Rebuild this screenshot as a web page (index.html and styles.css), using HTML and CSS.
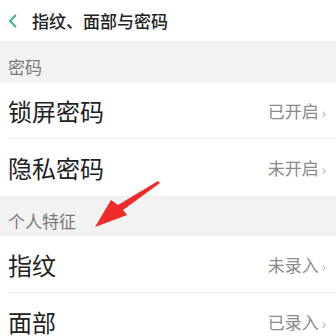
FILE: index.html
```html
<!DOCTYPE html>
<html>
	<head>
		<meta charset="utf-8" />
		<meta name="viewport" content="width=device-width, initial-scale=1">
		<title>指纹、面部与密码</title>
		<link rel="stylesheet" href="styles.css">
	</head>
	<body>
		<div class="header">
			<svg class="back" width="10" height="14" viewBox="0 0 10 14">
				<polyline points="8,1 2,7 8,13" fill="none" stroke="#3fb68e" stroke-width="2" />
			</svg>
			<span class="title">指纹、面部与密码</span>
		</div>
		<div class="section">密码</div>
		<div class="row">
			<span class="name">锁屏密码</span>
			<span class="state">已开启<i class="arrow">›</i></span>
		</div>
		<div class="row last">
			<span class="name">隐私密码</span>
			<span class="state">未开启<i class="arrow">›</i></span>
		</div>
		<div class="section">个人特征</div>
		<div class="row">
			<span class="name">指纹</span>
			<span class="state">未录入<i class="arrow">›</i></span>
		</div>
		<div class="row last">
			<span class="name">面部</span>
			<span class="state">已录入<i class="arrow">›</i></span>
		</div>
		<svg class="mark" width="80" height="50" viewBox="0 0 80 50">
			<polygon points="65,1 67,3 30,30 34,35 2,47 18,20 25,25" fill="#ee2b2b" />
		</svg>
	</body>
</html>
```
FILE: styles.css
```css
* {
	padding: 0;
	margin: 0;
}

body {
	width: 336px;
	height: 336px;
	overflow: hidden;
	background-color: #fff;
	font-family: "Noto Sans CJK SC", "Noto Sans", sans-serif;
	position: relative;
}

.header {
	height: 41px;
	display: flex;
	align-items: center;
	padding-left: 8px;
	border-bottom: 1px solid #ececec;
}

.back {
	margin-right: 14px;
}

.title {
	font-size: 17px;
	font-weight: 500;
	color: #222;
}

.section {
	height: 40px;
	line-height: 50px;
	background-color: #f2f2f2;
	color: #777;
	font-size: 17px;
	padding-left: 8px;
}

.row {
	height: 56px;
	margin-left: 8px;
	padding-right: 10px;
	display: flex;
	align-items: center;
	justify-content: space-between;
	border-bottom: 1px solid #f0f0f0;
}

.row.last {
	border-bottom: none;
	height: 57px;
}

.name {
	font-size: 24px;
	color: #222;
}

.state {
	font-size: 17px;
	color: #8a8a8a;
}

.arrow {
	font-style: normal;
	font-size: 14px;
	color: #aaa;
	margin-left: 3px;
}

.mark {
	position: absolute;
	left: 93px;
	top: 180px;
}
```
